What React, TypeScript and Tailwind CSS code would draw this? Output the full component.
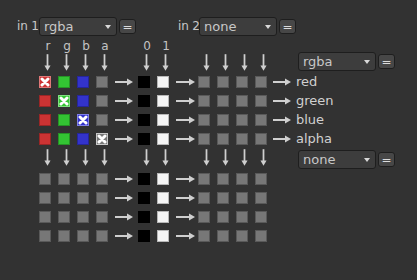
import React from "react";

const swatch = ["bg-[#cc3333]", "bg-[#33c433]", "bg-[#3333cc]", "bg-[#787878]", "bg-[#000000]", "bg-[#f5f5f5]"];
const selBorder = ["border-[#e07878]", "border-[#80e080]", "border-[#8080e8]", "border-[#c8c8c8]"];

function VArrow() {
  return (
    <svg width="8" height="19" viewBox="0 0 8 19" className="ml-[5px] block">
      <rect x="3" y="0" width="2" height="14" fill="#cfcfcf" />
      <polygon points="0.5,13 7.5,13 4,19" fill="#cfcfcf" />
    </svg>
  );
}

function HArrow({ w }: { w: number }) {
  return (
    <svg width={w} height="8" viewBox={`0 0 ${w} 8`} className="block">
      <rect x="0" y="3" width={w - 5} height="2" fill="#cfcfcf" />
      <polygon points={`${w - 6},0.5 ${w},4 ${w - 6},7.5`} fill="#cfcfcf" />
    </svg>
  );
}

function Cross() {
  return (
    <svg width="10" height="10" viewBox="0 0 10 10" className="block">
      <path d="M2 2 L8 8 M8 2 L2 8" stroke="#ffffff" strokeWidth="3" strokeLinecap="round" />
    </svg>
  );
}

function Dropdown({ label }: { label: string }) {
  return (
    <div className="flex items-center">
      <div className="relative h-[19px] w-[78px] rounded-[3px] border border-[#1e1e1e] bg-[#3d3d3d] pl-[4px] text-[13px] leading-[17px] text-[#c8c8c8]">
        {label}
        <svg width="6" height="4" viewBox="0 0 6 4" className="absolute right-[5px] top-[7px]">
          <polygon points="0,0 6,0 3,4" fill="#d8d8d8" />
        </svg>
      </div>
      <div className="ml-[2px] flex h-[15px] w-[17px] items-center justify-center rounded-[3px] border border-[#1e1e1e] bg-[#474747] text-[12px] leading-none text-[#dcdcdc]">
        =
      </div>
    </div>
  );
}

// the ten columns: r g b a | 0 1 | four output channels
function Cols({ cell, arrows }: { cell: (i: number) => React.ReactNode; arrows?: boolean }) {
  const col = (i: number) => (
    <div key={i} className="relative flex w-[12px] items-center">
      {cell(i)}
    </div>
  );
  return (
    <>
      <div className="flex gap-[7px]">{[0, 1, 2, 3].map(col)}</div>
      <div className="flex w-[30px] items-center pl-[7px]">{arrows && <HArrow w={18} />}</div>
      <div className="flex gap-[7px]">{[4, 5].map(col)}</div>
      <div className="flex w-[29px] items-center pl-[7px]">{arrows && <HArrow w={19} />}</div>
      <div className="flex gap-[7px]">{[6, 7, 8, 9].map(col)}</div>
    </>
  );
}

function Swatch({ row, i }: { row: number; i: number }) {
  let color = "bg-[#777777]";
  if (i === 4 || i === 5) color = swatch[i];
  else if (i < 4 && row < 4) color = swatch[i];
  const sel = row < 4 && i === row;
  return (
    <div
      className={`flex h-[12px] w-[12px] shrink-0 items-center justify-center border ${color} ${
        sel ? selBorder[i] : "border-black/25"
      }`}
    >
      {sel && <Cross />}
    </div>
  );
}

const labels = ["r", "g", "b", "a", "0", "1"];
const outs = ["red", "green", "blue", "alpha"];

export default function App() {
  return (
    <div className="h-[280px] w-[417px] overflow-hidden bg-[#323232] pt-[17px] font-['DejaVu_Sans','Liberation_Sans',sans-serif] text-[13px] text-[#c8c8c8]">
      {/* inputs */}
      <div className="flex h-[19px] items-center whitespace-nowrap pl-[17px]">
        <span className="w-[22px] shrink-0 text-[12px] leading-[19px] [word-spacing:-0.5px]">in 1</span>
        <Dropdown label="rgba" />
        <span className="ml-[42px] w-[21px] shrink-0 text-[12px] leading-[19px] [word-spacing:-0.5px]">in 2</span>
        <Dropdown label="none" />
      </div>

      {/* column labels */}
      <div className="mt-[3px] flex h-[14px] pl-[39px] text-[12px] leading-[13px] text-[#c4c4c4]">
        <Cols cell={(i) => (i < 6 ? <span className="w-[18px] shrink-0 text-center">{labels[i]}</span> : null)} />
      </div>

      {/* arrows down into the matrix */}
      <div className="flex h-[19px] pl-[39px]">
        <Cols cell={() => <VArrow />} />
        <div className="-mt-[1px] ml-[31px]">
          <Dropdown label="rgba" />
        </div>
      </div>

      <div className="mt-[4px] flex flex-col gap-[7px]">
        {[0, 1, 2, 3].map((row) => (
          <div key={row} className="flex h-[12px] pl-[39px]">
            <Cols arrows cell={(i) => <Swatch row={row} i={i} />} />
            <div className="flex w-[29px] items-center pl-[6px]">
              <HArrow w={18} />
            </div>
            <span className="leading-[12px] text-[#d0d0d0]">{outs[row]}</span>
          </div>
        ))}
      </div>

      <div className="mt-[3px] flex h-[19px] pl-[39px]">
        <Cols cell={() => <VArrow />} />
        <div className="mt-[2px] ml-[31px]">
          <Dropdown label="none" />
        </div>
      </div>

      <div className="mt-[6px] flex flex-col gap-[7px]">
        {[4, 5, 6, 7].map((row) => (
          <div key={row} className="flex h-[12px] pl-[39px]">
            <Cols arrows cell={(i) => <Swatch row={row} i={i} />} />
          </div>
        ))}
      </div>
    </div>
  );
}
